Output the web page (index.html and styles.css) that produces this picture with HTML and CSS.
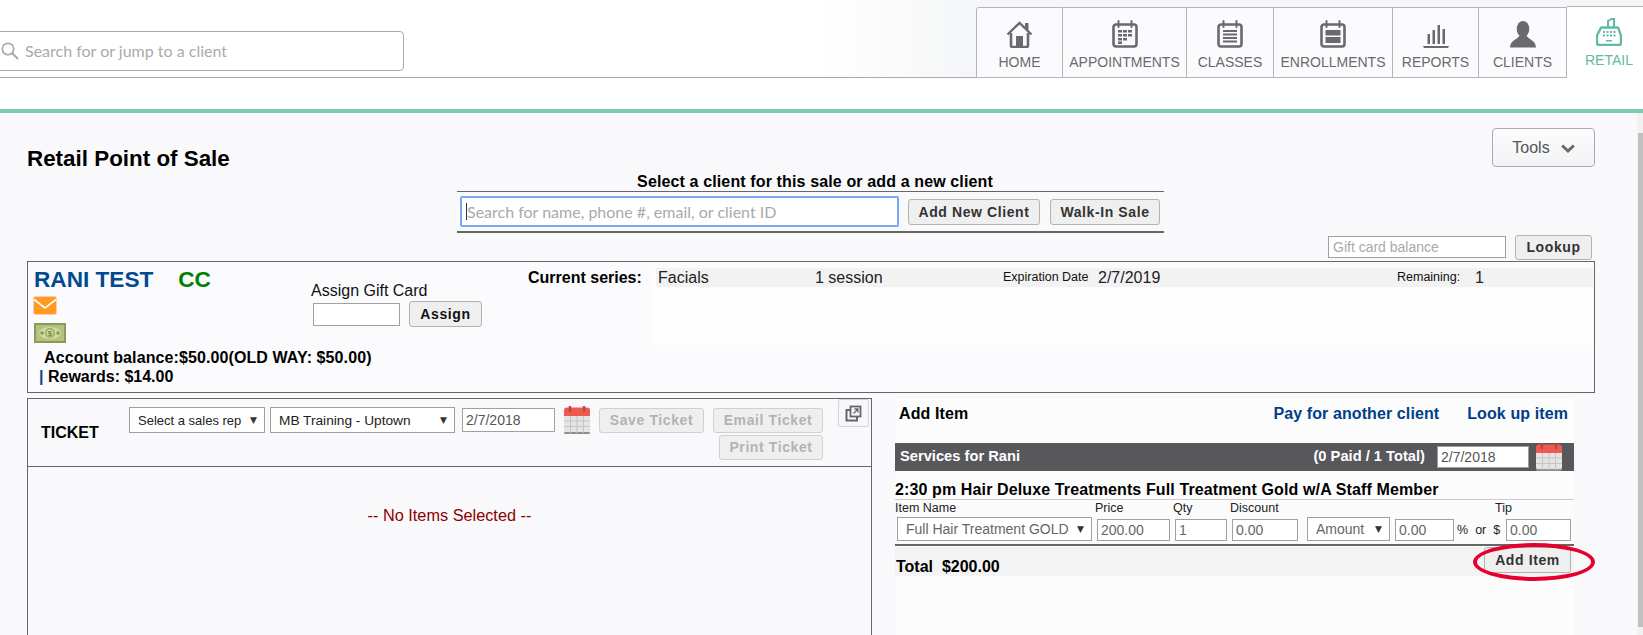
FILE: index.html
```html
<!DOCTYPE html>
<html lang="en">
<head>
<meta charset="utf-8">
<title>Retail Point of Sale</title>
<link rel="stylesheet" href="styles.css">
</head>
<body>
<svg class="defs" aria-hidden="true">
  <symbol id="pad" viewBox="0 0 26 28">
    <rect x="1.5" y="4.5" width="23" height="22" rx="2.5" fill="none" stroke="currentColor" stroke-width="2.6"/>
    <path d="M6.5 1v6M19.5 1v6" stroke="currentColor" stroke-width="2" stroke-linecap="round"/>
  </symbol>
  <symbol id="redcal" viewBox="0 0 28 28">
    <rect x="1" y="4" width="26" height="23" rx="3" fill="#e6e4e2"/>
    <rect x="1" y="26" width="26" height="2" rx="1" fill="#8f8f8f"/>
    <path d="M1 4.5a3 3 0 0 1 3-3h20a3 3 0 0 1 3 3V10H1z" fill="#ef5a50"/>
    <path d="M7 0v5M21 0v5" stroke="#b5483f" stroke-width="2.4" stroke-linecap="round"/>
    <path d="M1 15h26M1 20.500h26M7.500 10v17M14 10v17M20.500 10v17" stroke="#c7c5c3" stroke-width="1"/>
  </symbol>
</svg>

<header class="topbar">
  <div class="topbar-row">
    <div class="jump">
      <svg class="jump-icon" viewBox="0 0 18 18"><circle cx="7" cy="7" r="5.700" fill="none" stroke="#aaa" stroke-width="1.700"/><path d="M11 11l6 6" stroke="#aaa" stroke-width="2"/></svg>
      <input class="jump-input" type="text" placeholder="Search for or jump to a client">
    </div>
    <nav class="tabs">
      <a class="tab tab-home">
        <svg class="tab-icon" width="27" height="28" viewBox="0 0 27 28"><path d="M1.500 14.500L13.500 3l12 11.500" fill="none" stroke="currentColor" stroke-width="2.400"/><path d="M19 3h3.500v7H19z" fill="currentColor"/><path d="M5 13v12.500a1.500 1.500 0 0 0 1.500 1.500h14a1.500 1.500 0 0 0 1.500-1.500V13" fill="none" stroke="currentColor" stroke-width="2.600"/><path d="M10 16h7v11h-7z" fill="currentColor"/></svg>
        <span>HOME</span>
      </a>
      <a class="tab tab-appt">
        <svg class="tab-icon" width="26" height="28" viewBox="0 0 26 28"><use href="#pad"/><path d="M6 10h4v2.500H6zM11 10h4v2.500h-4zM16 10h4v2.500h-4zM6 14h4v2.500H6zM11 14h4v2.500h-4zM16 14h4v2.500h-4zM6 18h4v2.500H6zM11 18h4v2.500h-4zM6 21.500h4V24H6z" fill="currentColor"/></svg>
        <span>APPOINTMENTS</span>
      </a>
      <a class="tab tab-class">
        <svg class="tab-icon" width="26" height="28" viewBox="0 0 26 28"><use href="#pad"/><path d="M6 10h14v2H6zM6 13.500h14v2H6zM6 17h14v2H6zM6 20.500h14v2H6z" fill="currentColor"/></svg>
        <span>CLASSES</span>
      </a>
      <a class="tab tab-enrol">
        <svg class="tab-icon" width="26" height="28" viewBox="0 0 26 28"><use href="#pad"/><path d="M5.500 10h15v5.500h-15zM5.500 17h15v6h-15z" fill="currentColor"/></svg>
        <span>ENROLLMENTS</span>
      </a>
      <a class="tab tab-reports">
        <svg class="tab-icon" width="26" height="28" viewBox="0 0 26 28"><path d="M6 14h2.500v10H6zM11 10h2.500v14H11zM16 5h2.500v19H16zM21 9h2.500v15H21z" fill="currentColor" transform="translate(-1.500 0)"/><path d="M0 26h26l-1 2H1z" fill="currentColor"/></svg>
        <span>REPORTS</span>
      </a>
      <a class="tab tab-clients">
        <svg class="tab-icon" width="26" height="28" viewBox="0 0 26 28"><ellipse cx="13" cy="9" rx="6.300" ry="8" fill="currentColor"/><path d="M9.500 15.500C7 20 0.500 20 0 27.500h26c-.5-7.500-7-7.500-9.500-12z" fill="currentColor"/></svg>
        <span>CLIENTS</span>
      </a>
      <a class="tab tab-retail">
        <svg class="tab-icon" width="26" height="28" viewBox="0 0 26 28"><path d="M12 9V3l3.500-2H18v8" fill="none" stroke="currentColor" stroke-width="2"/><path d="M6 9.500h15a1.500 1.500 0 0 1 1.500 1.200L25 17.500V25a2 2 0 0 1-2 2H3a2 2 0 0 1-2-2v-7.500l3.500-6.800A1.500 1.500 0 0 1 6 9.500z" fill="none" stroke="currentColor" stroke-width="2.400"/><path d="M7 13h2v2H7zM10.500 13h2v2h-2zM14 13h2v2h-2zM17.500 13h2v2h-2zM7 16.500h2v2H7zM10.500 16.500h2v2h-2zM14 16.500h2v2h-2zM17.500 16.500h2v2h-2zM10 22h6v1.500h-6z" fill="currentColor"/></svg>
        <span>RETAIL</span>
      </a>
    </nav>
  </div>
</header>

<div class="page">
  <main class="content">
    <div class="page-head">
      <h1 class="page-title">Retail Point of Sale</h1>
      <button class="tools" type="button">Tools
        <svg class="tools-chevron" width="14" height="9" viewBox="0 0 14 9"><path d="M1.200 1.500l5.800 5.500 5.800-5.500" fill="none" stroke="#666" stroke-width="2.800"/></svg>
      </button>
    </div>

    <section class="client-pick">
      <h2 class="client-pick-title">Select a client for this sale or add a new client</h2>
      <div class="client-pick-row">
        <div class="client-search"><input class="client-search-input" type="text" placeholder="Search for name, phone #, email, or client ID"></div>
        <button class="btn btn-newclient" type="button">Add New Client</button>
        <button class="btn btn-walkin" type="button">Walk-In Sale</button>
      </div>
    </section>

    <div class="gift-row">
      <input class="field gift-input" type="text" placeholder="Gift card balance">
      <button class="btn btn-lookup" type="button">Lookup</button>
    </div>

    <section class="client-card">
      <div class="card-top">
        <div class="card-client">
          <div class="client-name"><span class="name-blue">RANI TEST</span><span class="name-green">CC</span></div>
          <svg class="icon-mail" width="24" height="19" viewBox="0 0 24 19"><rect x="0.500" y="0.500" width="23" height="18" rx="2" fill="#ff9a1f" stroke="#ffc9c0"/><path d="M1 3.500l11 8.500 11-8.500" fill="none" stroke="#fff" stroke-width="1.600"/></svg>
          <svg class="icon-cash" width="32" height="20" viewBox="0 0 32 20"><rect width="32" height="20" fill="#8b9a5b"/><rect x="2" y="2" width="28" height="16" fill="#b4c27f"/><ellipse cx="16" cy="10" rx="11" ry="6" fill="#cfdb9f"/><circle cx="16" cy="10" r="5" fill="#9aa969"/><circle cx="16" cy="10" r="3.600" fill="#cfdb9f"/><text class="cash-sign" x="16" y="13">$</text><circle cx="8" cy="10" r="1.800" fill="#8b9a5b"/><circle cx="24" cy="10" r="1.800" fill="#8b9a5b"/></svg>
        </div>
        <div class="card-assign">
          <label class="assign-label">Assign Gift Card</label>
          <div class="assign-row">
            <input class="field assign-input" type="text">
            <button class="btn btn-assign" type="button">Assign</button>
          </div>
        </div>
        <div class="series-label">Current series:</div>
        <div class="series-box">
          <div class="series-row">
            <span>Facials</span>
            <span>1 session</span>
            <span class="series-small">Expiration Date</span>
            <span>2/7/2019</span>
            <span class="series-small">Remaining:</span>
            <span>1</span>
          </div>
        </div>
      </div>
      <div class="card-balance">
        <p class="balance-line">Account balance:$50.00(OLD WAY: $50.00)</p>
        <p class="rewards-line"><span class="rewards-sep">|</span> Rewards: $14.00</p>
      </div>
    </section>

    <div class="panels">
      <section class="ticket">
        <div class="ticket-head">
          <div class="ticket-title">TICKET</div>
          <div class="ticket-controls">
            <div class="ticket-row">
              <span class="select select-rep"><select><option>Select a sales rep</option></select></span>
              <span class="select select-loc"><select><option>MB Training - Uptown</option></select></span>
              <input class="field ticket-date" type="text" value="2/7/2018">
              <svg class="cal" width="28" height="28"><use href="#redcal"/></svg>
              <button class="btn btn-off btn-save" type="button" disabled>Save Ticket</button>
              <button class="btn btn-off btn-email" type="button" disabled>Email Ticket</button>
            </div>
            <div class="ticket-row ticket-row-end">
              <button class="btn btn-off btn-print" type="button" disabled>Print Ticket</button>
            </div>
          </div>
          <button class="popout" type="button" aria-label="Pop out">
            <svg width="17" height="17" viewBox="0 0 17 17"><path d="M5 5H1.500v10.500H12V12" fill="none" stroke="#666" stroke-width="2"/><rect x="5.500" y="1.500" width="10" height="10" fill="none" stroke="#666" stroke-width="1.800"/><path d="M8.500 8.500l4-4M9.500 4h3.500v3.500" fill="none" stroke="#666" stroke-width="1.300"/></svg>
          </button>
        </div>
        <div class="ticket-body">-- No Items Selected --</div>
      </section>

      <section class="add-item">
        <div class="add-head">
          <strong class="add-title">Add Item</strong>
          <a class="add-link add-link-pay">Pay for another client</a>
          <a class="add-link">Look up item</a>
        </div>
        <div class="service-bar">
          <span class="service-name">Services for Rani</span>
          <span class="service-count">(0 Paid / 1 Total)</span>
          <input class="field service-date" type="text" value="2/7/2018">
          <svg class="cal" width="28" height="28"><use href="#redcal"/></svg>
        </div>
        <h3 class="appt-title">2:30 pm Hair Deluxe Treatments Full Treatment Gold w/A Staff Member</h3>
        <div class="item-grid">
          <span class="col-label">Item Name</span>
          <span class="col-label col-shift">Price</span>
          <span class="col-label col-shift">Qty</span>
          <span class="col-label col-shift">Discount</span>
          <span></span>
          <span></span>
          <span class="col-label col-tip">Tip</span>

          <span class="select select-item"><select><option>Full Hair Treatment GOLD</option></select></span>
          <input class="field item-field item-price" type="text" value="200.00">
          <input class="field item-field item-qty" type="text" value="1">
          <input class="field item-field item-disc" type="text" value="0.00">
          <span class="select select-amount"><select><option>Amount</option></select></span>
          <div class="pct-cell">
            <input class="field item-field item-pct" type="text" value="0.00">
            <span class="pct-text pct-sign">%</span><span class="pct-text">or</span><span class="pct-text">$</span>
          </div>
          <input class="field item-field item-tip" type="text" value="0.00">
        </div>
        <div class="total-row">
          <strong class="total-text">Total&nbsp; $200.00</strong>
          <button class="btn btn-additem" type="button">Add Item</button>
          <span class="red-ring"></span>
        </div>
      </section>
    </div>
  </main>
  <div class="scrollbar"><div class="scrollbar-thumb"></div></div>
</div>
</body>
</html>
```

FILE: styles.css
```css
* { box-sizing: border-box; }
html, body { margin: 0; padding: 0; }
body {
  width: 1643px;
  height: 635px;
  overflow: hidden;
  font-family: "Liberation Sans", Arial, sans-serif;
  color: #000;
  background: #f9f9fb;
}
.defs { width: 0; height: 0; display: block; overflow: hidden; }

/* Top bar */
.topbar {
  height: 113px;
  background: #fff;
  border-bottom: 4px solid #7cc8b5;
}
.topbar-row {
  height: 78px;
  display: flex;
  align-items: flex-end;
  justify-content: space-between;
  border-bottom: 1px solid #a9a9b0;
  background: linear-gradient(90deg, #fff 50%, #f5f6f7 59%);
}
.jump {
  display: flex;
  align-items: center;
  height: 40px;
  width: 444px;
  margin: 0 0 6px -40px;
  padding-left: 40px;
  background: #fff;
  border: 1px solid #a9a9b5;
  border-radius: 4px;
}
.jump-icon { width: 18px; height: 18px; flex: none; }
.jump-input {
  flex: 1;
  min-width: 0;
  margin: -2px 0 0 4px;
  border: 0;
  outline: 0;
  background: none;
  font: 16px Lato, sans-serif;
}
.jump-input::placeholder { color: #aaa; opacity: 1; }
.tabs { display: flex; height: 71px; margin-bottom: -1px; }
.tab {
  display: flex;
  flex-direction: column;
  align-items: center;
  height: 71px;
  padding-top: 12px;
  background: #fbfbfd;
  border: 1px solid #b3b3b8;
  border-left: 0;
  color: #6a6a6d;
  font-size: 14px;
  line-height: 16px;
}
.tab span { margin-top: 6px; white-space: nowrap; }
.tab-icon { display: block; flex: none; }
.tab-home { width: 87px; border-left: 1px solid #b3b3b8; border-top-left-radius: 3px; }
.tab-appt { width: 124px; }
.tab-class { width: 87px; }
.tab-enrol { width: 119px; }
.tab-reports { width: 86px; }
.tab-clients { width: 88px; }
.tab-retail {
  width: 76px;
  height: 72px;
  margin-top: -1px;
  padding: 11px 0 0 8px;
  border: 0;
  border-top: 1px solid #b3b3b8;
  background: #fff;
  color: #63b9a3;
}

/* Page */
.page { display: flex; height: 522px; }
.content {
  flex: none;
  width: 1637px;
  height: 522px;
  padding: 15px 0 0 27px;
  overflow: hidden;
}
.scrollbar { flex: 1; padding: 20px 0 0 1px; background: #f1f1f2; }
.scrollbar-thumb { height: 494px; background: #c1c1c1; }

.page-head { display: flex; justify-content: space-between; width: 1568px; height: 39px; }
.page-title { margin: 19px 0 0; font-size: 22.400px; line-height: 24px; font-weight: bold; }
.tools {
  display: flex;
  align-items: center;
  justify-content: center;
  gap: 11px;
  width: 103px;
  height: 39px;
  padding: 0;
  border: 1px solid #aaabb0;
  border-radius: 4px;
  background: linear-gradient(#fcfcfd, #f1f3f5);
  color: #555;
  font: 16px "Liberation Sans", Arial, sans-serif;
}
.tools-chevron { margin-top: 2px; }

.client-pick { width: 707px; margin: 5px 0 0 430px; border-bottom: 2px solid #666; }
.client-pick-title {
  margin: 0;
  height: 20px;
  padding-left: 9px;
  border-bottom: 1px solid #666;
  text-align: center;
  font-size: 16px;
  letter-spacing: 0.130px;
  line-height: 19px;
  font-weight: bold;
}
.client-pick-row { display: flex; align-items: center; height: 39px; padding-left: 3px; }
.client-search { position: relative; flex: none; }
.client-search::after {
  content: "";
  position: absolute;
  left: 6px;
  top: 7px;
  width: 1px;
  height: 17px;
  background: #333;
}
.client-search-input {
  display: block;
  width: 439px;
  height: 31px;
  padding: 0 5px;
  background: #fff;
  border: 2px solid #7aa9f2;
  border-radius: 2px;
  outline: 0;
  font: 16px Lato, sans-serif;
}
.client-search-input::placeholder { color: #a9a9a9; opacity: 1; }

.btn {
  padding: 0;
  border: 1px solid #b2b2b2;
  border-radius: 3px;
  background: #efefef;
  color: #333;
  font: bold 14px "Liberation Sans", Arial, sans-serif;
  letter-spacing: 0.600px;
  white-space: nowrap;
}
.btn-newclient { width: 132px; height: 26px; margin-left: 9px; }
.btn-walkin { width: 110px; height: 26px; margin-left: 10px; }
.btn-off { background: #efefef; border-color: #d0d0d0; color: #b3b3b3; }
.field {
  display: block;
  background: #fff;
  border: 1px solid #a0a0a0;
  outline: 0;
  padding: 0 3px;
  color: #555;
  font: 14px "Liberation Sans", Arial, sans-serif;
}
.gift-row { display: flex; justify-content: flex-end; align-items: center; width: 1565px; height: 28px; gap: 9px; }
.gift-input { width: 178px; height: 22px; padding-left: 4px; }
.gift-input::placeholder { color: #aaa; opacity: 1; }
.btn-lookup { width: 77px; height: 25px; }

/* Client card */
.client-card {
  width: 1568px;
  height: 132px;
  background: #fbfbfd;
  border: 1px solid #666;
}
.card-top { display: flex; height: 83px; }
.card-client { flex: none; width: 283px; padding: 5px 0 0 5px; }
.client-name {
  display: flex;
  height: 26px;
  margin-left: 1px;
  font-size: 22.600px;
  line-height: 26px;
  font-weight: bold;
}
.name-blue { color: #004a8f; }
.name-green { margin-left: 25px; color: #008000; }
.icon-mail { display: block; margin-top: 3px; }
.icon-cash { display: block; margin: 8px 0 0 1px; }
.cash-sign { fill: #76854a; font-size: 8px; font-weight: bold; text-anchor: middle; }
.card-assign { flex: none; width: 217px; padding-top: 20px; }
.assign-label { display: block; font-size: 16px; line-height: 18px; color: #111; }
.assign-row { display: flex; align-items: center; gap: 9px; height: 26px; margin: 1px 0 0 2px; }
.assign-input { width: 87px; height: 23px; }
.btn-assign { width: 73px; height: 26px; color: #111; }
.series-label { flex: none; width: 122px; padding-top: 6px; font-size: 16px; line-height: 19px; font-weight: bold; }
.series-box { flex: none; width: 943px; height: 77px; margin-top: 6px; background: #fdfdfe; }
.series-row {
  display: grid;
  grid-template-columns: 157px 188px 95px 299px 78px 1fr;
  align-items: center;
  height: 19px;
  margin-left: 6px;
  padding-left: 2px;
  background: #f2f2f3;
  color: #222;
  font-size: 16px;
  line-height: 19px;
}
.series-small { font-size: 12.500px; color: #111; }
.card-balance { padding-top: 3px; font-size: 16px; line-height: 19px; font-weight: bold; }
.balance-line { margin: 0 0 0 16px; letter-spacing: 0.100px; }
.rewards-line { margin: 0 0 0 11px; }
.rewards-sep { color: #004a8f; }

/* Panels */
.panels { display: flex; margin-top: 5px; }
.ticket {
  flex: none;
  width: 845px;
  height: 300px;
  background: #f9f9fb;
  border: 1px solid #666;
}
.ticket-head { display: flex; height: 68px; border-bottom: 1px solid #666; }
.ticket-title {
  flex: none;
  width: 101px;
  padding: 25px 0 0 13px;
  font-size: 16px;
  line-height: 18px;
  font-weight: bold;
}
.ticket-controls { flex: none; width: 694px; padding-top: 8px; }
.ticket-row { display: flex; align-items: center; height: 26px; }
.ticket-row-end { justify-content: flex-end; margin-top: 1px; }
.select { position: relative; display: block; flex: none; }
.select select {
  display: block;
  width: 100%;
  height: 100%;
  padding: 0 16px 0 8px;
  appearance: none;
  background: #fff;
  border: 1px solid #a0a0a0;
  border-radius: 0;
  color: #222;
  font: 14px "Liberation Sans", Arial, sans-serif;
}
.select::after {
  content: "\25BC";
  position: absolute;
  right: 8px;
  top: 50%;
  margin-top: -6px;
  color: #333;
  font: 9px/12px "DejaVu Sans", sans-serif;
}
.select-rep { width: 136px; height: 26px; }
.select-rep select { font-size: 13px; }
.select-loc { width: 185px; height: 26px; margin-left: 5px; }
.select-loc select { font-size: 13.700px; }
.ticket-date { width: 93px; height: 24px; margin-left: 7px; }
.cal { display: block; flex: none; }
.ticket-row .cal { margin-left: 8px; }
.btn-save { width: 105px; height: 25px; margin-left: 8px; }
.btn-email { width: 110px; height: 25px; margin-left: 9px; }
.btn-print { width: 104px; height: 25px; }
.popout {
  width: 31px;
  height: 28px;
  margin-left: 15px;
  padding: 0;
  display: flex;
  align-items: center;
  justify-content: center;
  background: #f6f7fa;
  border: 1px solid #d4d5da;
  border-radius: 2px;
}
.ticket-body {
  padding-top: 39px;
  text-align: center;
  color: #8b0000;
  font-size: 16.300px;
  line-height: 19px;
}

.add-item {
  flex: none;
  width: 702px;
  height: 300px;
  padding-left: 23px;
  background: linear-gradient(90deg, #f9f9fb 23px, #fcfcfd 23px);
}
.add-head {
  display: flex;
  align-items: center;
  width: 679px;
  height: 30px;
  padding: 2px 6px 0 4px;
  margin-bottom: 15px;
  font-size: 16px;
  letter-spacing: 0.100px;
}
.add-title { margin-right: auto; }
.add-link { color: #003f87; font-weight: bold; }
.add-link-pay { margin-right: 28px; }
.service-bar {
  display: flex;
  align-items: center;
  width: 679px;
  height: 28px;
  padding: 0 11px 0 5px;
  background: #58585c;
  color: #fff;
  font-size: 14.700px;
  font-weight: bold;
}
.service-name { margin: -2px auto 0 0; }
.service-count { margin-top: -2px; }
.service-date { width: 92px; height: 22px; margin: 0 6px 0 12px; font-weight: normal; }
.appt-title {
  width: 679px;
  height: 29px;
  margin: 0;
  padding-top: 10px;
  border-bottom: 1px solid #ccc;
  font-size: 16px;
  letter-spacing: 0.120px;
  line-height: 18px;
  font-weight: bold;
  white-space: nowrap;
}
.item-grid {
  display: grid;
  grid-template-columns: 202px 78px 57px 75px 88px 111px 68px;
  grid-template-rows: 17px 24px;
  width: 679px;
  background: #fbfbfc;
  border-bottom: 2px solid #666;
  box-sizing: content-box;
  padding-bottom: 3px;
  height: 41px;
  align-items: end;
}
.col-label { font-size: 12.500px; line-height: 16px; color: #222; align-self: start; }
.col-shift { margin-left: -2px; }
.col-tip { margin-left: -11px; }
.select-item { width: 195px; height: 24px; margin-left: 2px; }
.select-amount { width: 83px; height: 24px; }
.select-item select, .select-amount select { color: #666; }
.item-field { height: 22px; color: #666; font-size: 14px; }
.item-price { width: 73px; }
.item-qty { width: 52px; }
.item-disc { width: 66px; }
.pct-cell { display: flex; align-items: center; }
.item-pct { width: 59px; flex: none; }
.pct-text { margin-left: 7px; font-size: 12.500px; color: #222; }
.pct-sign { margin-left: 3px; }
.item-tip { width: 65px; }
.total-row {
  position: relative;
  display: flex;
  justify-content: space-between;
  width: 679px;
  height: 29px;
  margin-top: 1px;
  padding-right: 3px;
  background: #f3f3f4;
}
.total-text { align-self: flex-end; font-size: 16px; line-height: 19px; margin-left: 1px; }
.btn-additem { width: 87px; height: 26px; }
.red-ring {
  position: absolute;
  left: 578px;
  top: -4px;
  width: 122px;
  height: 38px;
  border: 4px solid #e6002d;
  border-radius: 50%;
}
```
